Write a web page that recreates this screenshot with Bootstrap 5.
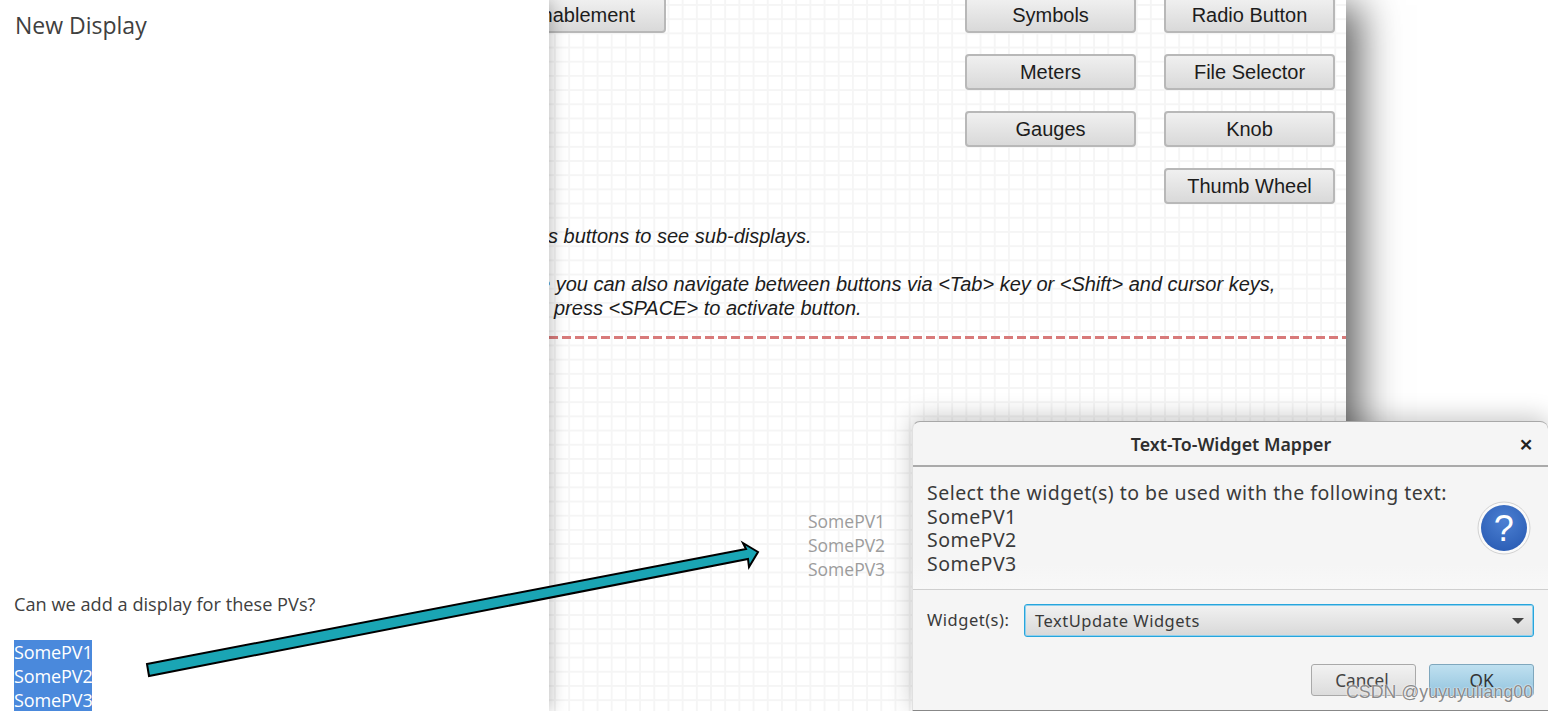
<!DOCTYPE html>
<html lang="en">
<head>
<meta charset="utf-8">
<title>New Display</title>
<link href="https://cdn.jsdelivr.net/npm/bootstrap@5.3.0/dist/css/bootstrap.min.css" rel="stylesheet">
<style>
html,body{height:711px;overflow:hidden;background:#fff}
.desk{position:relative;width:1548px;height:711px;overflow:hidden}
.slide-panel{position:absolute;left:0;top:0;width:549px;height:711px;background:#fff;z-index:3;box-shadow:1px 0 16px rgba(0,0,0,.28);font-family:"Open Sans",sans-serif;color:#404040;padding:8px 14px 0}
.slide-title{font-size:23px;line-height:34px;margin:0;font-weight:400;padding-left:1px}
.slide-q{font-size:18.2px;line-height:24px;margin:0}
.slide-sel{background:#4a89dc;color:#fff;font-size:18px;line-height:24px;width:78px;height:71px;margin-top:24px;letter-spacing:-.1px}
.grid-win{position:absolute;left:549px;top:-3px;width:797px;height:720px;z-index:1;background-color:#fff;background-image:linear-gradient(#f5f5f5 2px,transparent 2px),linear-gradient(90deg,#f5f5f5 2px,transparent 2px);background-size:14.2px 14.2px;background-position:5px 7px;box-shadow:14px 8px 38px rgba(0,0,0,.62);font-family:"Liberation Sans",sans-serif;color:#1c1c1c}
.btn-row{display:flex;height:36px;margin-bottom:21px}
.wbtn{width:171px;height:36px;border:2px solid #b8b8b8;border-radius:4px;background:linear-gradient(#f0f0f0,#d9d9d9);font-size:20px;line-height:32px;text-align:center;color:#1c1c1c;padding:0}
.wbtn-en{width:117px;margin-right:299px;border-left:0;border-radius:0 4px 4px 0;text-align:right;padding-right:29px;white-space:nowrap;direction:rtl}
.wbtn-void{width:171px;margin-right:28px}
.wbtn-gap{margin-right:28px}
.wbtn-push{margin-left:416px}
.note{font-style:italic;font-size:20px;line-height:24px;margin:0;white-space:nowrap}
.note-a{margin-top:-1px;margin-left:-1px}
.note-b{margin-top:24px;margin-left:-10px}
.note-c{margin-left:5px}
.dash{height:3px;background:repeating-linear-gradient(90deg,#d87a7a 0 9px,transparent 9px 13px);margin-top:16px}
.pv-ghost{position:absolute;left:259px;top:512px;font-family:"Open Sans",sans-serif;font-size:17.5px;line-height:24px;color:#9c9c9c}
.arrow-box{position:absolute;left:0;top:0;z-index:4;pointer-events:none}
.dlg{position:absolute;left:912px;top:421px;width:636px;height:291px;z-index:5;background:#f5f5f5;border-radius:8px 8px 0 0;border-top:1px solid #a8a8a8;border-left:1px solid #e0e0e0;border-bottom:2px solid #888;font-family:"Noto Sans",sans-serif;color:#3a3a3a;box-shadow:0 -4px 24px rgba(0,0,0,.22)}
.dlg-head{height:45px;border-bottom:2px solid #aaa;position:relative;font-size:17.8px;font-weight:600;line-height:44px;text-align:center;color:#2e2e2e;padding-left:1px}
.dlg-x{position:absolute;right:15px;top:0;font-size:24px;line-height:44px;color:#222}
.dlg-msg{height:123px;border-bottom:1px solid #cfcfcf;padding:14px 17px 0 14px;font-size:19.5px;letter-spacing:.47px;line-height:23.7px;background:linear-gradient(#f5f5f5 80%,#f8f8f8)}
.dlg-icon{margin-top:20px}
.dlg-row{padding:14px 14px 0 14px;height:74px;font-size:16.5px;letter-spacing:.5px}
.dlg-label{width:97px;line-height:32px}
.dlg-combo{height:33px;border:1px solid #27a5dc;box-shadow:0 0 0 1px #8fd0ee inset;border-radius:3px;background:linear-gradient(#f2f2f2,#d8d8d8);line-height:30px;padding:0 9px 0 10px}
.combo-caret{width:0;height:0;border-left:6px solid transparent;border-right:6px solid transparent;border-top:6px solid #444}
.dlg-foot{padding:0 14px 0 0;justify-content:flex-end;gap:13px}
.dlg-btn{width:105px;height:32px;border:1px solid #a9a9a9;border-radius:3px;background:linear-gradient(#f2f2f2,#dcdcdc);font-size:17.2px;line-height:31px;text-align:center;color:#444;padding:0 3px 0 0}
.dlg-ok{background:linear-gradient(#bfe0f0,#93c4de);border-color:#7fa7bd;color:#333;padding:0}
.mark-text{position:absolute;left:1346px;top:681px;z-index:6;font-family:"Liberation Sans",sans-serif;font-size:17.8px;line-height:22px;color:#8a8a8a;text-shadow:0 0 1px #fff,0 0 2px #fff;white-space:nowrap}
</style>
</head>
<body>
<div class="desk">
  <section class="grid-win">
    <div class="btn-row"><button class="wbtn wbtn-en">nablement</button><button class="wbtn wbtn-gap">Symbols</button><button class="wbtn">Radio Button</button></div>
    <div class="btn-row"><button class="wbtn wbtn-push wbtn-gap">Meters</button><button class="wbtn">File Selector</button></div>
    <div class="btn-row"><button class="wbtn wbtn-push wbtn-gap">Gauges</button><button class="wbtn">Knob</button></div>
    <div class="btn-row"><span class="wbtn-push wbtn-void"></span><button class="wbtn">Thumb Wheel</button></div>
    <p class="note note-a">s buttons to see sub-displays.</p>
    <p class="note note-b">e you can also navigate between buttons via &lt;Tab&gt; key or &lt;Shift&gt; and cursor keys,</p>
    <p class="note note-c">press &lt;SPACE&gt; to activate button.</p>
    <div class="dash"></div>
    <div class="pv-ghost">SomePV1<br>SomePV2<br>SomePV3</div>
  </section>

  <aside class="slide-panel d-flex flex-column">
    <h1 class="slide-title">New Display</h1>
    <div class="mt-auto">
      <p class="slide-q">Can we add a display for these PVs?</p>
      <div class="slide-sel">SomePV1<br>SomePV2<br>SomePV3</div>
    </div>
  </aside>

  <svg class="arrow-box" width="1548" height="711" viewBox="0 0 1548 711" aria-hidden="true">
    <polygon points="147,664 746,549 743,543 758,552 749,567 748,559 149,676" fill="#1aa5b4" stroke="#000" stroke-width="2" stroke-linejoin="miter"/>
  </svg>

  <section class="dlg d-flex flex-column">
    <div class="dlg-head">Text-To-Widget Mapper<span class="dlg-x">×</span></div>
    <div class="dlg-msg d-flex justify-content-between">
      <div>Select the widget(s) to be used with the following text:<br>SomePV1<br>SomePV2<br>SomePV3</div>
      <svg width="54" height="54" viewBox="0 0 54 54" class="flex-shrink-0 dlg-icon" aria-hidden="true">
        <defs><radialGradient id="qb" cx="50%" cy="35%" r="70%"><stop offset="0" stop-color="#4c80d2"/><stop offset="1" stop-color="#2a5cb4"/></radialGradient></defs>
        <circle cx="27" cy="27" r="26" fill="#fafafa" stroke="#d2d2d2"/>
        <circle cx="27" cy="27" r="23" fill="url(#qb)"/>
        <text x="27" y="40" font-family="Liberation Sans, sans-serif" font-size="36" fill="#fff" text-anchor="middle">?</text>
      </svg>
    </div>
    <div class="dlg-row d-flex align-items-start">
      <div class="dlg-label">Widget(s):</div>
      <div class="dlg-combo flex-grow-1 d-flex align-items-center justify-content-between"><span>TextUpdate Widgets</span><span class="combo-caret"></span></div>
    </div>
    <div class="dlg-foot d-flex">
      <button class="dlg-btn">Cancel</button>
      <button class="dlg-btn dlg-ok">OK</button>
    </div>
  </section>

  <div class="mark-text">CSDN @yuyuyuliang00</div>
</div>
<script src="https://cdn.jsdelivr.net/npm/bootstrap@5.3.0/dist/js/bootstrap.bundle.min.js"></script>
</body>
</html>
